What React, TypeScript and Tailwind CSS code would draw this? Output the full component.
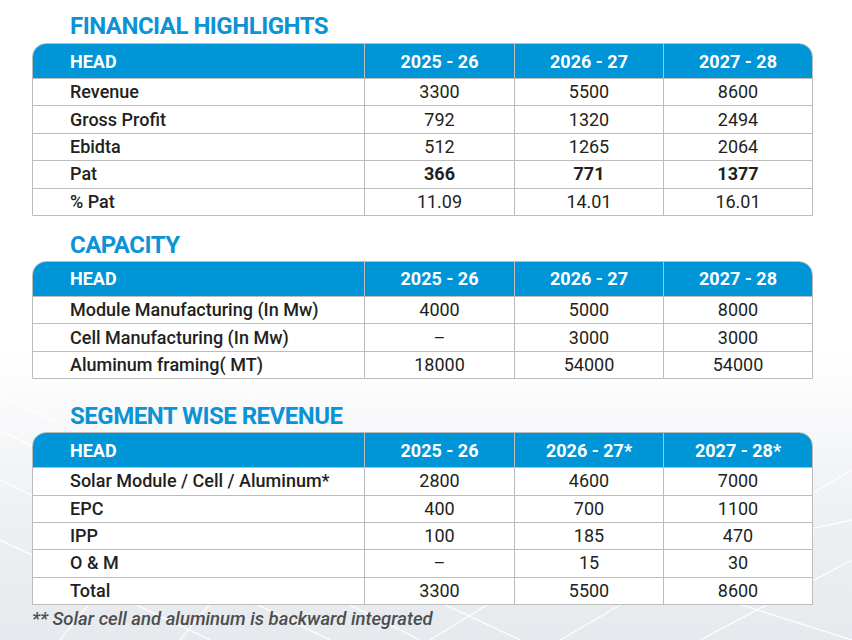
const font = { fontFamily: 'Roboto, "Liberation Sans", sans-serif' };

type Row = { head: string; values: string[]; bold?: boolean };

const financial: Row[] = [
  { head: 'Revenue', values: ['3300', '5500', '8600'] },
  { head: 'Gross Profit', values: ['792', '1320', '2494'] },
  { head: 'Ebidta', values: ['512', '1265', '2064'] },
  { head: 'Pat', values: ['366', '771', '1377'], bold: true },
  { head: '% Pat', values: ['11.09', '14.01', '16.01'] },
];

const capacity: Row[] = [
  { head: 'Module Manufacturing (In Mw)', values: ['4000', '5000', '8000'] },
  { head: 'Cell Manufacturing (In Mw)', values: ['–', '3000', '3000'] },
  { head: 'Aluminum framing( MT)', values: ['18000', '54000', '54000'] },
];

const segment: Row[] = [
  { head: 'Solar Module / Cell / Aluminum*', values: ['2800', '4600', '7000'] },
  { head: 'EPC', values: ['400', '700', '1100'] },
  { head: 'IPP', values: ['100', '185', '470'] },
  { head: 'O & M', values: ['–', '15', '30'] },
  { head: 'Total', values: ['3300', '5500', '8600'] },
];

function DataTable({ years, rows }: { years: string[]; rows: Row[] }) {
  return (
    <div className="w-[781px] overflow-hidden rounded-t-[14px] border border-[#bcbcbc] bg-white">
      <div className="grid h-[34px] grid-cols-[331px_150px_149px_149px] bg-[#0095d7] text-[18px] font-bold text-white">
        <div className="flex items-center pl-[37px]">HEAD</div>
        {years.map((y) => (
          <div key={y} className="flex items-center justify-center border-l border-[#bcbcbc]">
            {y}
          </div>
        ))}
      </div>
      {rows.map((r) => (
        <div
          key={r.head}
          className="grid h-[27.4px] grid-cols-[331px_150px_149px_149px] border-t border-[#bcbcbc] text-[18px] leading-[22px] text-[#231f20]"
        >
          <div className="flex items-center pl-[37px] font-medium">{r.head}</div>
          {r.values.map((v, i) => (
            <div
              key={i}
              className={`flex items-center justify-center border-l border-[#bcbcbc] ${r.bold ? 'font-bold' : 'font-normal'}`}
            >
              {v}
            </div>
          ))}
        </div>
      ))}
    </div>
  );
}

function Title({ children, className }: { children: string; className: string }) {
  return (
    <h2 className={`pl-[38px] text-[24px] font-bold leading-[28px] tracking-[-0.5px] text-[#0b93d6] ${className}`}>
      {children}
    </h2>
  );
}

function PanelLines() {
  return (
    <svg className="absolute inset-0 h-full w-full" viewBox="0 0 852 640" preserveAspectRatio="none">
      <g stroke="#ffffff" strokeWidth="1.4" opacity="0.9">
        <path d="M0 430 L420 640" />
        <path d="M0 480 L330 640" />
        <path d="M0 540 L210 640" />
        <path d="M0 395 L520 640" />
        <path d="M60 640 L260 390" />
        <path d="M180 640 L330 460" />
        <path d="M430 640 L560 560" />
        <path d="M560 640 L852 470" />
        <path d="M700 640 L852 560" />
        <path d="M600 560 L852 640" />
        <path d="M470 600 L852 520" />
      </g>
    </svg>
  );
}

export default function App() {
  return (
    <div
      className="relative h-[640px] w-[852px] overflow-hidden bg-[linear-gradient(180deg,#ffffff_0%,#ffffff_55%,#eef0f3_80%,#e6e9ed_100%)]"
      style={font}
    >
      <PanelLines />
      <div className="relative flex flex-col pl-[32px]">
        <Title className="mt-[12px] mb-[3px]">FINANCIAL HIGHLIGHTS</Title>
        <DataTable years={['2025 - 26', '2026 - 27', '2027 - 28']} rows={financial} />
        <Title className="mt-[15px] mb-[2px]">CAPACITY</Title>
        <DataTable years={['2025 - 26', '2026 - 27', '2027 - 28']} rows={capacity} />
        <Title className="mt-[23px] mb-[2px]">SEGMENT WISE REVENUE</Title>
        <DataTable years={['2025 - 26', '2026 - 27*', '2027 - 28*']} rows={segment} />
        <p className="mt-[3px] text-[18.5px] font-medium italic leading-[22px] text-[#4d4d4f]">
          ** Solar cell and aluminum is backward integrated
        </p>
      </div>
    </div>
  );
}
